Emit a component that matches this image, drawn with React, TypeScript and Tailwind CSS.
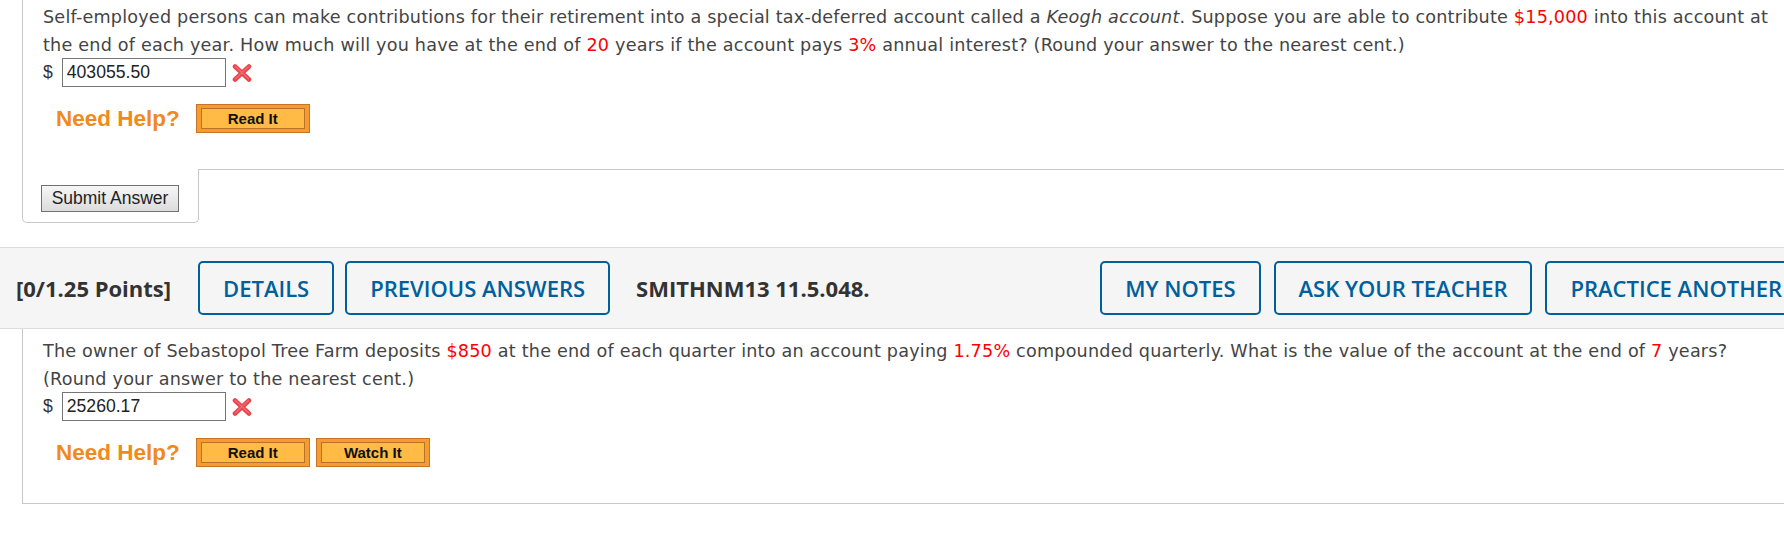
import React from "react";

const RED = "text-[#ff0000]";

const WrongMark: React.FC = () => (
  <svg width="20" height="18" viewBox="0 0 20 18" className="ml-[6px]">
    <path
      d="M3 2.5 L17 15.5 M17 2.5 L3 15.5"
      stroke="#e9464d"
      strokeWidth="4.6"
      strokeLinecap="round"
    />
    <path
      d="M3.5 2.5 L16.5 14.8 M16.5 2.5 L3.5 14.8"
      stroke="#f57a7e"
      strokeWidth="1.4"
      strokeLinecap="round"
      opacity="0.7"
    />
  </svg>
);

interface AnswerRowProps {
  value: string;
}

const AnswerRow: React.FC<AnswerRowProps> = ({ value }) => (
  <div className="-mt-px flex h-[29px] items-center font-['Liberation_Sans',Arial,sans-serif]">
    <span className="text-[17.6px] leading-[29px] text-[#333]">$</span>
    <input
      readOnly
      value={value}
      className="ml-[9px] h-[29px] w-[164px] border border-[#767676] bg-white px-[4px] text-[17.6px] text-[#222] outline-none"
    />
    <WrongMark />
  </div>
);

const OrangeButton: React.FC<{ label: string }> = ({ label }) => (
  <div className="h-[29px] w-[114px] border border-[#c27626] bg-[#f69b30] px-[4px] py-[3px]">
    <div className="flex h-full items-center justify-center border border-[#b8722a] bg-[#ffbb45] font-['Liberation_Sans',Arial,sans-serif] text-[15px] font-bold leading-none text-[#111]">
      {label}
    </div>
  </div>
);

const HelpRow: React.FC<{ watch?: boolean }> = ({ watch }) => (
  <div className="mt-[17px] flex h-[29px] items-center">
    <span className="ml-[13px] mr-[16px] font-['Liberation_Sans',Arial,sans-serif] text-[22.5px] font-bold leading-[29px] text-[#f08a1d]">
      Need Help?
    </span>
    <div className="flex gap-[6px]">
      <OrangeButton label="Read It" />
      {watch && <OrangeButton label="Watch It" />}
    </div>
  </div>
);

const HeaderButton: React.FC<{ label: string }> = ({ label }) => (
  <div className="flex h-[54px] items-center whitespace-nowrap rounded-[5px] border-2 border-[#00609c] px-[23px] text-[22px] font-semibold text-[#00609c]">
    {label}
  </div>
);

const questionText =
  "whitespace-nowrap font-['DejaVu_Sans',Verdana,sans-serif] text-[17.6px] leading-[28px] tracking-[0.2px] text-[#444]";

export default function App() {
  return (
    <div className="w-full overflow-hidden bg-white pb-[30px]">
      {/* previous question, scrolled partly out of view */}
      <div className="ml-[22px] border-l border-[#c8c8c8] pb-9 pl-5 pt-[3px]">
        <p className={questionText}>
          Self-employed persons can make contributions for their retirement
          into a special tax-deferred account called a{" "}
          <i>Keogh account</i>. Suppose you are able to contribute{" "}
          <span className={RED}>$15,000</span> into this account at
          <br />
          the end of each year. How much will you have at the end of{" "}
          <span className={RED}>20</span> years if the account pays{" "}
          <span className={RED}>3%</span> annual interest? (Round your answer
          to the nearest cent.)
        </p>
        <AnswerRow value="403055.50" />
        <HelpRow />
      </div>
      <div className="ml-[22px] flex">
        <div className="w-[177px] rounded-b-[5px] border-x border-b border-[#c8c8c8] pb-[10px] pl-[18px] pt-4">
          <button className="block h-[27px] w-[138px] border border-[#707070] bg-gradient-to-b from-[#f6f6f6] to-[#dcdcdc] font-['Liberation_Sans',Arial,sans-serif] text-[17.5px] leading-none text-[#222]">
            Submit Answer
          </button>
        </div>
        <div className="flex-1 border-t border-[#c8c8c8]" />
      </div>

      {/* question header */}
      <div className="mt-6 border-y border-[#dcdcdc] bg-[#f5f5f5]">
        <div className="flex w-[1823px] items-center py-[13px] pl-4 pr-4 font-['Open_Sans',sans-serif]">
          <span className="whitespace-nowrap text-[22px] font-bold text-[#333]">
            [0/1.25 Points]
          </span>
          <div className="ml-[27px] flex gap-[11px]">
            <HeaderButton label="DETAILS" />
            <HeaderButton label="PREVIOUS ANSWERS" />
          </div>
          <span className="ml-[26px] whitespace-nowrap text-[22px] font-bold text-[#333]">
            SMITHNM13 11.5.048.
          </span>
          <div className="ml-auto flex gap-[13px]">
            <HeaderButton label="MY NOTES" />
            <HeaderButton label="ASK YOUR TEACHER" />
            <HeaderButton label="PRACTICE ANOTHER" />
          </div>
        </div>
      </div>

      {/* current question */}
      <div className="ml-[22px] border-b border-l border-[#c8c8c8] pb-9 pl-5 pt-2">
        <p className={questionText}>
          The owner of Sebastopol Tree Farm deposits{" "}
          <span className={RED}>$850</span> at the end of each quarter into an
          account paying <span className={RED}>1.75%</span> compounded
          quarterly. What is the value of the account at the end of{" "}
          <span className={RED}>7</span> years?
          <br />
          (Round your answer to the nearest cent.)
        </p>
        <AnswerRow value="25260.17" />
        <HelpRow watch />
      </div>
    </div>
  );
}
